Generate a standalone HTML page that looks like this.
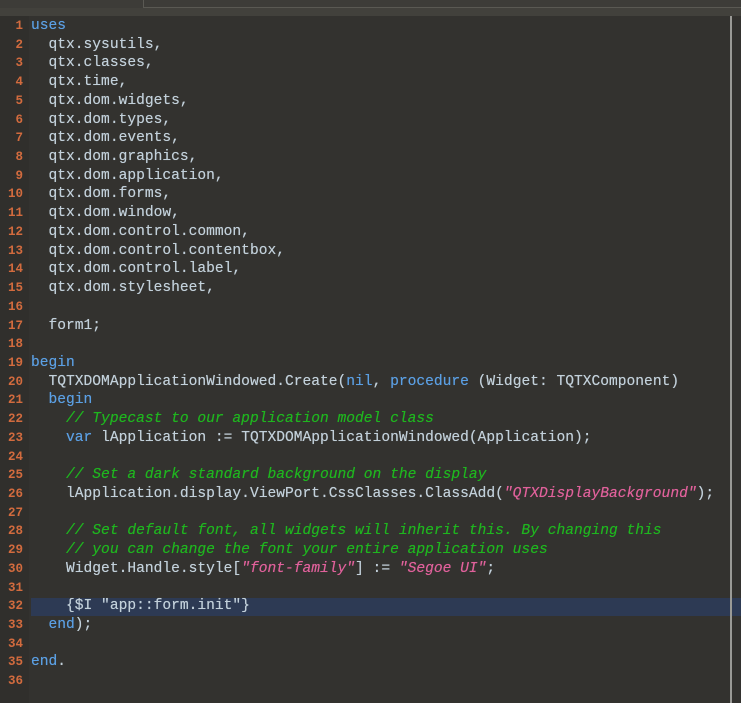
<!DOCTYPE html><html><head><style>
body{margin:0;width:741px;height:703px;background:#33322f;overflow:hidden;position:relative;font-family:"Liberation Mono",monospace;}
.top{position:absolute;left:0;top:0;width:741px;height:16px;background:#3d3c38;}
.tab{position:absolute;left:143px;top:0;width:600px;height:7px;border-left:1px solid #5a5953;border-bottom:1px solid #5a5953;}
.top2{position:absolute;left:0;top:8px;width:741px;height:8px;background:#42413c;}
.gut{position:absolute;left:0;top:16px;width:29px;height:687px;background:#302f2c;}
.vl{position:absolute;left:730px;top:16px;width:2px;height:687px;background:#9a9a96;}
.hl{position:absolute;left:31px;top:598px;width:710px;height:18px;background:#2d3a54;}
.code{position:absolute;left:0;top:17px;font-size:14.6px;line-height:18.72px;white-space:pre;color:#c2d0da;text-shadow:0 0 0.4px #c2d0da;}
.n{display:inline-block;width:23px;text-align:right;color:#d26b3e;margin-right:8px;font-size:12.5px;font-weight:bold;text-shadow:none;}
.k{color:#5b9fe3;text-shadow:0 0 0.4px #5b9fe3}.c{color:#1fb51f;font-style:italic;text-shadow:0 0 0.4px #1fb51f}.s{color:#e0619b;font-style:italic;text-shadow:0 0 0.4px #e0619b}
</style></head><body>
<div class="top"></div><div class="tab"></div><div class="top2"></div>
<div class="gut"></div><div class="hl"></div><div class="vl"></div>
<div class="code"><span class="n">1</span><span class="k">uses</span>
<span class="n">2</span>  qtx.sysutils,
<span class="n">3</span>  qtx.classes,
<span class="n">4</span>  qtx.time,
<span class="n">5</span>  qtx.dom.widgets,
<span class="n">6</span>  qtx.dom.types,
<span class="n">7</span>  qtx.dom.events,
<span class="n">8</span>  qtx.dom.graphics,
<span class="n">9</span>  qtx.dom.application,
<span class="n">10</span>  qtx.dom.forms,
<span class="n">11</span>  qtx.dom.window,
<span class="n">12</span>  qtx.dom.control.common,
<span class="n">13</span>  qtx.dom.control.contentbox,
<span class="n">14</span>  qtx.dom.control.label,
<span class="n">15</span>  qtx.dom.stylesheet,
<span class="n">16</span>
<span class="n">17</span>  form1;
<span class="n">18</span>
<span class="n">19</span><span class="k">begin</span>
<span class="n">20</span>  TQTXDOMApplicationWindowed.Create(<span class="k">nil</span>, <span class="k">procedure</span> (Widget: TQTXComponent)
<span class="n">21</span>  <span class="k">begin</span>
<span class="n">22</span>    <span class="c">// Typecast to our application model class</span>
<span class="n">23</span>    <span class="k">var</span> lApplication := TQTXDOMApplicationWindowed(Application);
<span class="n">24</span>
<span class="n">25</span>    <span class="c">// Set a dark standard background on the display</span>
<span class="n">26</span>    lApplication.display.ViewPort.CssClasses.ClassAdd(<span class="s">"QTXDisplayBackground"</span>);
<span class="n">27</span>
<span class="n">28</span>    <span class="c">// Set default font, all widgets will inherit this. By changing this</span>
<span class="n">29</span>    <span class="c">// you can change the font your entire application uses</span>
<span class="n">30</span>    Widget.Handle.style[<span class="s">"font-family"</span>] := <span class="s">"Segoe UI"</span>;
<span class="n">31</span>
<span class="n">32</span>    {$I "app::form.init"}
<span class="n">33</span>  <span class="k">end</span>);
<span class="n">34</span>
<span class="n">35</span><span class="k">end</span>.
<span class="n">36</span></div>
</body></html>
